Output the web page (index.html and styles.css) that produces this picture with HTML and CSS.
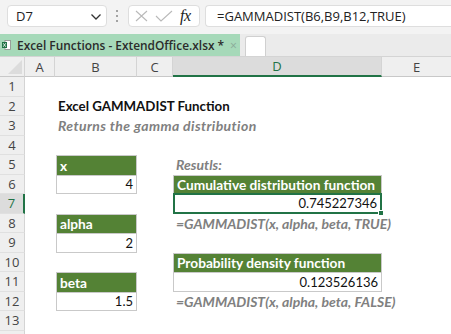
FILE: index.html
```html
<!DOCTYPE html>
<html>
<head>
<meta charset="utf-8">
<link rel="stylesheet" href="styles.css">
</head>
<body>
<div class="app">
  <div class="fbar">
    <div class="namebox">
      <span class="ref">D7</span>
      <svg class="chev" width="12" height="8" viewBox="0 0 12 8"><path d="M1.5 1.5 L6 6 L10.5 1.5" fill="none" stroke="#333" stroke-width="1.3"/></svg>
    </div>
    <svg class="dots" width="4" height="14" viewBox="0 0 4 14"><circle cx="2" cy="2" r="1" fill="#888"/><circle cx="2" cy="7" r="1" fill="#888"/><circle cx="2" cy="12" r="1" fill="#888"/></svg>
    <div class="fxbox">
      <svg width="16" height="12" viewBox="0 0 16 12"><path d="M2 1 L13 11 M13 1 L2 11" stroke="#b9b9b9" stroke-width="1.1" fill="none"/></svg>
      <svg width="18" height="12" viewBox="0 0 18 12"><path d="M1 6 L6 11 L17 1" stroke="#b9b9b9" stroke-width="1.1" fill="none"/></svg>
      <span class="fx">fx</span>
    </div>
    <div class="formula">=GAMMADIST(B6,B9,B12,TRUE)</div>
  </div>
  <div class="tabs">
    <div class="tab active">
      <svg class="xicon" width="9" height="10" viewBox="0 0 9 10"><rect x="3" y="0.5" width="5.5" height="9" fill="#fff" stroke="#8a8a8a" stroke-width="0.8"/><rect x="0" y="2" width="5" height="6" fill="#1f7244"/><path d="M1.2 3.2 L3.8 6.8 M3.8 3.2 L1.2 6.8" stroke="#fff" stroke-width="0.8"/></svg>
      <span class="tabname">Excel Functions - ExtendOffice.xlsx *</span>
      <span class="close">×</span>
    </div>
    <div class="tab blank"></div>
  </div>
  <div class="sheet">
    <div class="corner"><svg width="14" height="14" viewBox="0 0 14 14"><path d="M14 0 L14 14 L0 14 Z" fill="#dcdcdc"/></svg></div>
    <div class="ch">A</div>
    <div class="ch">B</div>
    <div class="ch">C</div>
    <div class="ch sel">D</div>
    <div class="ch last">E</div>

    <div class="rh">1</div>
    <div class="rh">2</div>
    <div class="rh">3</div>
    <div class="rh">4</div>
    <div class="rh">5</div>
    <div class="rh">6</div>
    <div class="rh sel">7</div>
    <div class="rh">8</div>
    <div class="rh">9</div>
    <div class="rh">10</div>
    <div class="rh">11</div>
    <div class="rh">12</div>
    <div class="rh">13</div>
    <div class="rh tail"></div>

    <div class="cell title">Excel GAMMADIST Function</div>
    <div class="cell subtitle note">Returns the gamma distribution</div>

    <div class="box box-x">
      <div class="hd">x</div>
      <div class="val">4</div>
    </div>
    <div class="box box-alpha">
      <div class="hd">alpha</div>
      <div class="val">2</div>
    </div>
    <div class="box box-beta">
      <div class="hd">beta</div>
      <div class="val">1.5</div>
    </div>

    <div class="cell results note">Resutls:</div>
    <div class="box box-cdf">
      <div class="hd">Cumulative distribution function</div>
      <div class="val active">0.745227346<span class="handle"></span></div>
    </div>
    <div class="cell f1 note">=GAMMADIST(x, alpha, beta, TRUE)</div>

    <div class="box box-pdf">
      <div class="hd">Probability density function</div>
      <div class="val">0.123526136</div>
    </div>
    <div class="cell f2 note">=GAMMADIST(x, alpha, beta, FALSE)</div>
  </div>
</div>
</body>
</html>
```

FILE: styles.css
```css
* { box-sizing: border-box; }
html, body { margin: 0; padding: 0; }
body { width: 451px; height: 334px; overflow: hidden; background: #fff; font-family: "Open Sans", "Noto Sans", sans-serif; }
.app { display: flex; flex-direction: column; height: 334px; }

.fbar { height: 34px; background: #f3f3f3; display: flex; align-items: center; padding: 0 0 2px 7px; flex: none; }
.namebox { width: 100px; height: 22px; background: #fff; border: 1px solid #dedede; border-radius: 4px; display: flex; align-items: center; justify-content: space-between; padding: 0 4px 0 8px; font-size: 13px; color: #222; }
.chev { margin-top: 1px; }
.dots { margin: 0 9px 0 8px; }
.fxbox { width: 72px; height: 22px; background: #fff; border: 1px solid #dedede; border-radius: 4px; display: flex; align-items: center; padding: 0 0 0 5px; gap: 5px; }
.fx { font-family: "Liberation Serif", serif; font-style: italic; font-size: 16px; color: #222; margin-left: 2px; letter-spacing: -0.5px; }
.formula { flex: 1; height: 22px; margin-left: 5px; background: #fff; border: 1px solid #dedede; border-right: none; border-radius: 4px 0 0 4px; display: flex; align-items: center; padding-left: 11px; font-size: 13px; color: #222; white-space: nowrap; }

.tabs { height: 23px; background: #ebebeb; display: flex; align-items: flex-end; flex: none; border-bottom: 1px solid #d4d4d4; }
.tab { height: 22px; }
.tab.active { width: 240px; background: #a6d9b9; display: flex; align-items: center; padding-left: 2px; }
.xicon { flex: none; }
.tabname { margin-left: 6px; font-size: 11.9px; font-weight: 600; color: #2b2b2b; white-space: nowrap; }
.close { margin-left: 6px; color: #8aa898; font-size: 12px; }
.tab.blank { width: 21px; margin-left: 5px; background: #fff; border: 1px solid #d0d0d0; border-bottom: none; border-radius: 3px 3px 0 0; height: 20px; }

.sheet { flex: 1; display: grid; grid-template-columns: 25px 30px 82px 36px 209px 1fr; grid-template-rows: 20px repeat(13, 19.5px) 1fr; font-family: "Lato", "Liberation Sans", sans-serif; font-size: 14px; color: #111; }
.corner { grid-row: 1; grid-column: 1; background: #efefef; border-right: 1px solid #d4d4d4; border-bottom: 1px solid #c8c8c8; display: flex; align-items: flex-end; justify-content: flex-end; padding: 0 2px 2px 0; }
.ch { grid-row: 1; background: #efefef; border-right: 1px solid #d4d4d4; border-bottom: 1px solid #c8c8c8; display: flex; align-items: center; justify-content: center; font-family: "Open Sans", sans-serif; font-size: 13px; color: #444; }
.ch.sel { background: #dcdcdc; border-bottom: 2px solid #217346; color: #217346; }
.ch.last { border-right: none; }
.rh { grid-column: 1; background: #efefef; border-right: 1px solid #d4d4d4; border-bottom: 1px solid #e0e0e0; display: flex; align-items: center; justify-content: center; font-family: "Open Sans", sans-serif; font-size: 13px; color: #444; }
.rh.sel { background: #dcdcdc; border-right: 2px solid #217346; color: #217346; }
.rh.tail { border-bottom: none; }

.cell { white-space: nowrap; display: flex; align-items: center; padding-left: 3px; }
.title { grid-row: 3; grid-column: 3 / 7; font-weight: 700; font-size: 13.3px; }
.note { font-weight: 700; font-style: italic; color: #808080; }
.subtitle { grid-row: 4; grid-column: 3 / 7; letter-spacing: 0.4px; }
.results { grid-row: 6; grid-column: 5 / 7; }
.f1 { grid-row: 9; grid-column: 5 / 7; }
.f2 { grid-row: 13; grid-column: 5 / 7; }

.box { grid-column: 3; display: grid; grid-template-rows: 1fr 1fr; border: 1px solid #c9c9c9; margin-left: 1px; }
.box-x { grid-row: 6 / span 2; }
.box-alpha { grid-row: 9 / span 2; }
.box-beta { grid-row: 12 / span 2; }
.box-cdf { grid-row: 7 / span 2; grid-column: 5; margin-left: 0; }
.box-pdf { grid-row: 11 / span 2; grid-column: 5; margin-left: 0; }
.hd { background: #548235; color: #fff; font-weight: 700; font-size: 13.7px; display: flex; align-items: center; padding-left: 3px; white-space: nowrap; }
.val { display: flex; align-items: center; justify-content: flex-end; padding-right: 3px; border-top: 1px solid #c9c9c9; position: relative; font-size: 13px; }
.val.active { border: 2px solid #217346; margin: -1px; padding-right: 3px; }
.handle { position: absolute; right: -4px; bottom: -4px; width: 6px; height: 6px; background: #217346; border: 1px solid #fff; }
```
